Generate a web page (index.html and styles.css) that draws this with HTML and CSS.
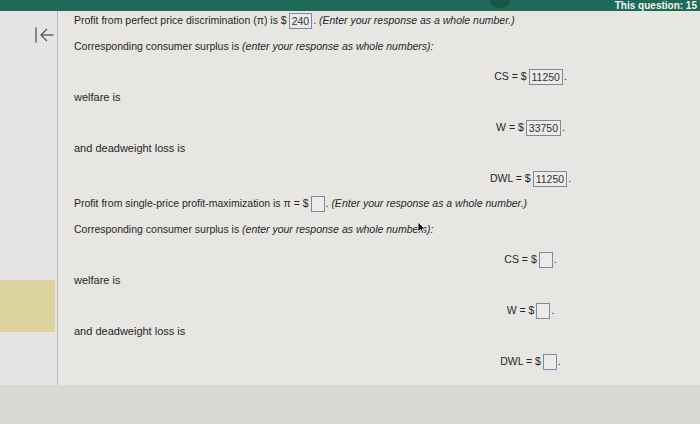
FILE: index.html
```html
<!DOCTYPE html>
<html lang="en">
<head>
<meta charset="utf-8">
<title>Question</title>
<link rel="stylesheet" href="styles.css">
</head>
<body>
<div class="screen">
  <header class="topbar">
    <span class="knob"></span>
    <span class="qtitle">This question: 15</span>
  </header>
  <div class="main">
    <aside class="sidebar">
      <button class="back" type="button" aria-label="Back">
        <svg width="20" height="16" viewBox="0 0 20 16" aria-hidden="true">
          <line x1="2" y1="0.5" x2="2" y2="15.5" stroke="#555" stroke-width="1.3"/>
          <line x1="7" y1="8" x2="19.5" y2="8" stroke="#555" stroke-width="1.3"/>
          <polyline points="13,2 7,8 13,14" fill="none" stroke="#555" stroke-width="1.3"/>
        </svg>
      </button>
      <div class="highlight"></div>
    </aside>
    <section class="content">
      <div class="part">
        <div class="row">Profit from perfect price discrimination (π) is $<span class="box">240</span>. <i>(Enter your response as a whole number.)</i></div>
        <div class="row sub">Corresponding consumer surplus is <i>(enter your response as whole numbers):</i></div>
        <div class="row answer">CS = $<span class="box">11250</span>.</div>
        <div class="row label">welfare is</div>
        <div class="row answer">W = $<span class="box">33750</span>.</div>
        <div class="row label">and deadweight loss is</div>
        <div class="row answer">DWL = $<span class="box">11250</span>.</div>
      </div>
      <div class="part">
        <div class="row">Profit from single-price profit-maximization is π = $<span class="box empty"></span>. <i>(Enter your response as a whole number.)</i></div>
        <div class="row sub">Corresponding consumer surplus is <i>(enter your response as whole numbers):</i></div>
        <div class="row answer">CS = $<span class="box empty"></span>.</div>
        <div class="row label">welfare is</div>
        <div class="row answer">W = $<span class="box empty"></span>.</div>
        <div class="row label">and deadweight loss is</div>
        <div class="row answer">DWL = $<span class="box empty"></span>.</div>
      </div>
      <svg class="cursor" width="9" height="13" viewBox="0 0 9 13" aria-hidden="true">
        <path d="M1 1 L1 11 L3.5 8.6 L5.3 12.3 L6.8 11.6 L5.1 8 L8.2 8 Z" fill="#111" stroke="#fff" stroke-width="0.8"/>
      </svg>
    </section>
  </div>
  <footer class="bottom"></footer>
</div>
</body>
</html>
```
FILE: styles.css
```css
* { box-sizing: border-box; }
html, body { margin: 0; padding: 0; }
body {
  width: 700px;
  height: 424px;
  overflow: hidden;
  background: #e6e5e2;
  font-family: "Liberation Sans", Arial, sans-serif;
  font-size: 11px;
  color: #262626;
}
.screen {
  display: flex;
  flex-direction: column;
  height: 424px;
}
.topbar {
  height: 11px;
  flex: none;
  background: #1e6a56;
  display: flex;
  align-items: flex-start;
  overflow: hidden;
  padding-left: 490px;
}
.knob {
  width: 20px;
  height: 16px;
  margin-top: -8px;
  border-radius: 50%;
  background: #195646;
}
.qtitle {
  margin-left: auto;
  margin-right: 3px;
  font-weight: bold;
  font-size: 10px;
  line-height: 11px;
  color: #f2f4f3;
  white-space: nowrap;
}
.main {
  flex: 1;
  display: flex;
  min-height: 0;
}
.sidebar {
  width: 58px;
  flex: none;
  background: #e4e5e4;
  border-right: 1px solid #b9b9b7;
  display: flex;
  flex-direction: column;
}
.back {
  margin: 16px 0 0 34px;
  padding: 0;
  border: 0;
  background: none;
  width: 20px;
  height: 16px;
  display: block;
}
.back svg { display: block; }
.highlight {
  margin-top: 237px;
  margin-right: 2px;
  height: 52px;
  background: #ddd39f;
}
.content {
  position: relative;
  flex: 1;
  padding: 0 0 0 16px;
  background: #e7e6e3;
}
.row {
  height: 18px;
  line-height: 18px;
  font-size: 10.5px;
  white-space: nowrap;
}
.sub { margin-top: 8px; }
.label { margin-top: 3px; font-size: 11px; }
.answer {
  margin-top: 12px;
  padding-left: 287px;
  text-align: center;
}
.part + .part { margin-top: 7px; }
.box {
  display: inline-block;
  height: 16px;
  line-height: 14px;
  padding: 0 2px;
  margin: 0 1px 0 2px;
  border: 1px solid #7c88a5;
  background: #ecebe8;
  vertical-align: middle;
  color: #333;
}
.box.empty { width: 14px; padding: 0; }
.cursor {
  position: absolute;
  left: 359px;
  top: 210px;
}
.bottom {
  height: 39px;
  flex: none;
  background: #d9d8d5;
}
```
